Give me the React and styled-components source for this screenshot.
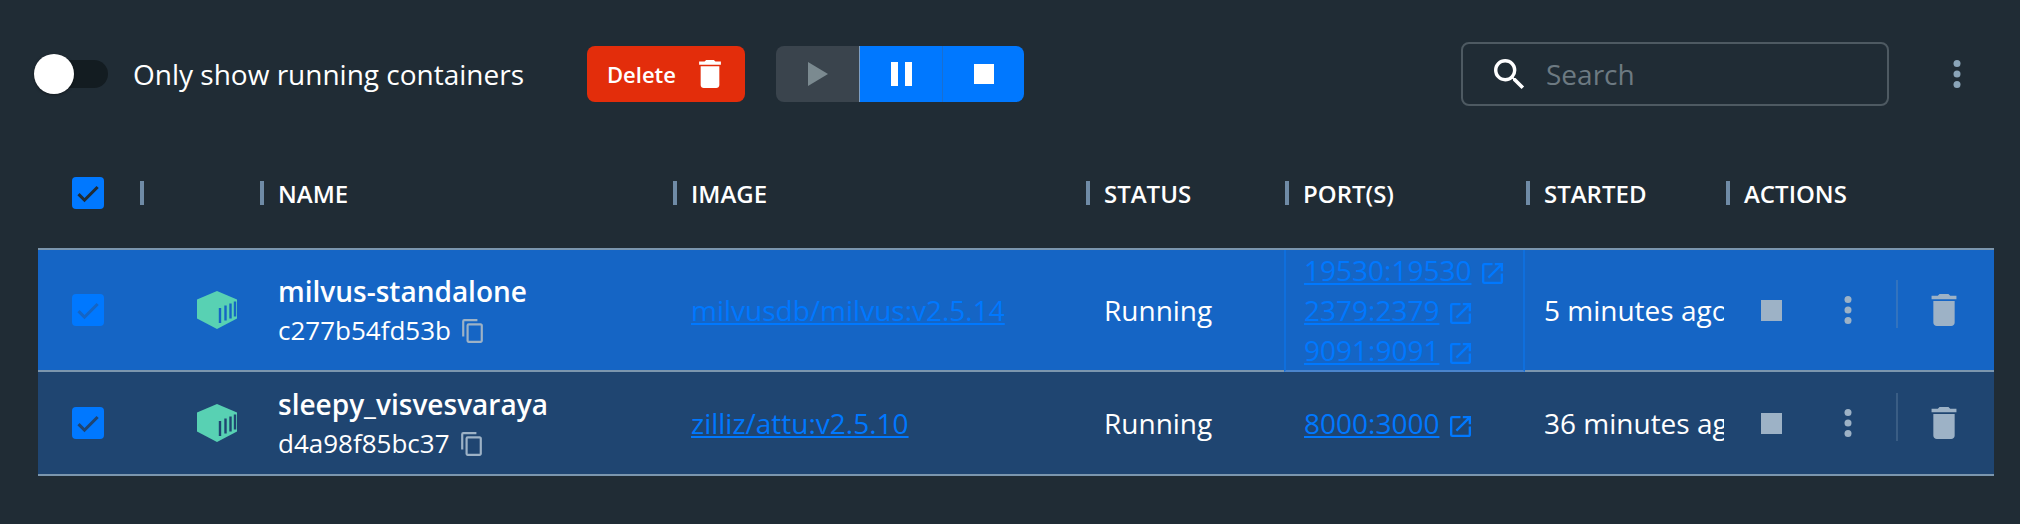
import React from "react";
import styled, { createGlobalStyle } from "styled-components";

const GlobalStyle = createGlobalStyle`
  html, body {
    margin: 0;
    background: #202c35;
    color: #fff;
    font-family: "Open Sans", "Noto Sans", sans-serif;
  }
`;

const COLUMNS = "102px 120px 413px 413px 199px 241px 200px 268px";

const containers = [
  {
    name: "milvus-standalone",
    id: "c277b54fd53b",
    image: "milvusdb/milvus:v2.5.14",
    ports: ["19530:19530", "2379:2379", "9091:9091"],
    started: "5 minutes ago",
    hovered: true,
  },
  {
    name: "sleepy_visvesvaraya",
    id: "d4a98f85bc37",
    image: "zilliz/attu:v2.5.10",
    ports: ["8000:3000"],
    started: "36 minutes ago",
  },
];

const Page = styled.div`
  width: 2020px;
  height: 524px;
  overflow: hidden;
  padding-top: 42px;
  box-sizing: border-box;
`;

const Toolbar = styled.div`
  display: flex;
  align-items: center;
  height: 64px;
  padding: 0 59px 0 34px;
`;

const Switch = styled.div`
  position: relative;
  width: 74px;
  height: 28px;
  border-radius: 14px;
  background: #131c21;
`;

const Knob = styled.div`
  position: absolute;
  left: 0;
  top: -6px;
  width: 40px;
  height: 40px;
  border-radius: 50%;
  background: #fff;
  box-shadow: 0 1px 3px rgba(0, 0, 0, 0.4);
`;

const SwitchLabel = styled.span`
  margin-left: 25px;
  width: 454px;
  font-size: 28px;
  white-space: nowrap;
`;

const DeleteButton = styled.button`
  display: flex;
  align-items: center;
  justify-content: space-between;
  width: 158px;
  height: 56px;
  padding: 0 21px 0 20px;
  border: 0;
  border-radius: 8px;
  background: #e32d0b;
  color: #fff;
  font-family: inherit;
  font-size: 22px;
  font-weight: 600;
`;

const ButtonGroup = styled.div`
  display: flex;
  margin-left: 31px;
  height: 56px;
  border-radius: 8px;
  overflow: hidden;
`;

const GroupButton = styled.button`
  display: flex;
  align-items: center;
  justify-content: center;
  width: ${(p) => p.$width}px;
  padding: 0;
  border: 0;
  border-left: ${(p) => (p.$divider ? `1px solid ${p.$divider}` : "0")};
  background: ${(p) => (p.$disabled ? "#3a444d" : "#0078ff")};
  box-sizing: border-box;
`;

const SearchBox = styled.div`
  display: flex;
  align-items: center;
  margin-left: auto;
  width: 428px;
  height: 64px;
  box-sizing: border-box;
  padding-left: 31px;
  border: 2px solid #4e5a62;
  border-radius: 8px;
`;

const Placeholder = styled.span`
  margin-left: 21px;
  font-size: 28px;
  color: #6d7a82;
`;

const MoreButton = styled.div`
  display: flex;
  margin-left: 64px;
`;

const Table = styled.div`
  margin: 32px 26px 0 38px;
`;

const HeaderRow = styled.div`
  display: grid;
  grid-template-columns: ${COLUMNS};
  align-items: center;
  height: 110px;
`;

const HeaderCell = styled.div`
  display: flex;
  align-items: center;
  gap: 14px;
  font-size: 24px;
  font-weight: 600;
`;

const HeaderBar = styled.span`
  width: 4px;
  height: 24px;
  background: #6f8ba6;
`;

const Row = styled.div`
  display: grid;
  grid-template-columns: ${COLUMNS};
  align-items: center;
  min-height: 102px;
  border-top: 2px solid #7b96ae;
  background: ${(p) => (p.$hovered ? "#1565c5" : "#1f4571")};
  &:last-child {
    border-bottom: 2px solid #7b96ae;
  }
`;

const CheckCell = styled.div`
  padding-left: 34px;
`;

const CheckBox = styled.div`
  display: flex;
  align-items: center;
  justify-content: center;
  width: 32px;
  height: 32px;
  border-radius: 4px;
  background: #0078ff;
`;

const IconCell = styled.div`
  display: flex;
  padding-left: 56px;
`;

const NameCell = styled.div`
  padding: 2px 0 0 18px;
`;

const ContainerName = styled.div`
  font-size: 28px;
  font-weight: 600;
  line-height: 39px;
  white-space: nowrap;
`;

const ContainerId = styled.div`
  display: flex;
  align-items: center;
  gap: 11px;
  font-size: 26px;
  line-height: 39px;
`;

const ImageLink = styled.a`
  padding-left: 18px;
  font-size: 28px;
  color: #0078ff;
  text-decoration: underline;
`;

const TextCell = styled.div`
  padding-left: 18px;
  font-size: 28px;
  white-space: nowrap;
  overflow: hidden;
`;

const StartedCell = styled(TextCell)`
  margin-right: 2px;
`;

const PortCell = styled.div`
  position: relative;
  align-self: stretch;
  display: flex;
  flex-direction: column;
  justify-content: center;
  margin: 0 1px -2px -1px;
  padding-left: 18px;
  border: 2px solid ${(p) => (p.$outlined ? "#0f6fdd" : "transparent")};
  border-top: 0;
  border-bottom-color: ${(p) => (p.$outlined ? "#4a84cc" : "transparent")};
`;

const PortLine = styled.div`
  display: flex;
  align-items: center;
  gap: 11px;
  height: 40px;
`;

const PortLink = styled.a`
  font-size: 28px;
  line-height: 40px;
  color: #0078ff;
  text-decoration: underline;
`;

const PortIcon = styled.span`
  display: flex;
  margin-top: 7px;
`;

const Actions = styled.div`
  display: flex;
  align-items: center;
  height: 100%;
`;

const ActionSlot = styled.div`
  display: flex;
  align-items: center;
  justify-content: center;
  width: ${(p) => p.$width}px;
`;

const ActionDivider = styled.span`
  width: 2px;
  height: 48px;
  margin: 0 0 12px 17px;
  background: rgba(123, 150, 174, 0.3);
`;

const TrashGlyph = ({ size, color }) => (
  <svg width={size} height={size} viewBox="5 3 14 18" fill={color}>
    <path d="M6 19c0 1.1.9 2 2 2h8c1.1 0 2-.9 2-2V7H6v12zM19 4h-3.5l-1-1h-5l-1 1H5v2h14V4z" />
  </svg>
);

const Dots = ({ color }) => (
  <svg width="8" height="28" viewBox="0 0 8 28" fill={color}>
    <circle cx="4" cy="3.5" r="3.5" />
    <circle cx="4" cy="14" r="3.5" />
    <circle cx="4" cy="24.5" r="3.5" />
  </svg>
);

const SearchGlyph = () => (
  <svg width="31" height="31" viewBox="3 3 18 18" fill="#fff">
    <path d="M15.5 14h-.79l-.28-.27A6.47 6.47 0 0 0 16 9.5 6.5 6.5 0 1 0 9.5 16c1.61 0 3.09-.59 4.23-1.57l.27.28v.79l5 4.99L20.49 19l-4.99-5zm-6 0C7.01 14 5 11.99 5 9.5S7.01 5 9.5 5 14 7.01 14 9.5 11.99 14 9.5 14z" />
  </svg>
);

const CheckGlyph = ({ color }) => (
  <svg width="28" height="28" viewBox="0 0 24 24" fill={color}>
    <path d="M9 16.2 4.8 12l-1.9 1.9L9 20 21.2 7.8l-1.9-1.9z" />
  </svg>
);

const ContainerGlyph = ({ stripe }) => (
  <svg width="42" height="38" viewBox="0 0 42 38">
    <path d="M21 0 41 8.5V27.5L21 38 1 27.5V8.5Z" fill="#58d1b3" />
    <path d="M24 17v15M29.5 14.5v15M34.5 12.5v15M39 10.5v15" stroke={stripe} strokeWidth="2.4" />
  </svg>
);

const CopyGlyph = () => (
  <svg width="21" height="24" viewBox="2 1 19 22" fill="#9db2c6">
    <path d="M16 1H4a2 2 0 0 0-2 2v14h2V3h12V1zm3 4H8a2 2 0 0 0-2 2v14c0 1.1.9 2 2 2h11c1.1 0 2-.9 2-2V7c0-1.1-.9-2-2-2zm0 16H8V7h11v14z" />
  </svg>
);

const OpenGlyph = () => (
  <svg width="21" height="21" viewBox="3 3 18 18" fill="#0078ff">
    <path d="M19 19H5V5h7V3H5a2 2 0 0 0-2 2v14a2 2 0 0 0 2 2h14c1.1 0 2-.9 2-2v-7h-2v7zM14 3v2h3.59l-9.83 9.83 1.41 1.41L19 6.41V10h2V3h-7z" />
  </svg>
);

const headers = ["", "NAME", "IMAGE", "STATUS", "PORT(S)", "STARTED", "ACTIONS"];

export default function App() {
  return (
    <Page>
      <GlobalStyle />
      <Toolbar>
        <Switch>
          <Knob />
        </Switch>
        <SwitchLabel>Only show running containers</SwitchLabel>
        <DeleteButton>
          Delete
          <TrashGlyph size={28} color="#fff" />
        </DeleteButton>
        <ButtonGroup>
          <GroupButton $width={83} $disabled>
            <svg width="20" height="24" viewBox="0 0 20 24" fill="#7b8a90">
              <path d="M0 0 20 12 0 24Z" />
            </svg>
          </GroupButton>
          <GroupButton $width={83} $divider="#7d9fc4">
            <svg width="21" height="24" viewBox="0 0 21 24" fill="#fff">
              <rect width="7" height="24" />
              <rect x="14" width="7" height="24" />
            </svg>
          </GroupButton>
          <GroupButton $width={82} $divider="#1a6fd0">
            <svg width="20" height="20" viewBox="0 0 20 20" fill="#fff">
              <rect width="20" height="20" />
            </svg>
          </GroupButton>
        </ButtonGroup>
        <SearchBox>
          <SearchGlyph />
          <Placeholder>Search</Placeholder>
        </SearchBox>
        <MoreButton>
          <Dots color="#8aa4b8" />
        </MoreButton>
      </Toolbar>
      <Table>
        <HeaderRow>
          <CheckCell>
            <CheckBox>
              <CheckGlyph color="#202c35" />
            </CheckBox>
          </CheckCell>
          {headers.map((title) => (
            <HeaderCell key={title}>
              <HeaderBar />
              {title}
            </HeaderCell>
          ))}
        </HeaderRow>
        {containers.map((c) => (
          <Row key={c.id} $hovered={c.hovered}>
            <CheckCell>
              <CheckBox>
                <CheckGlyph color={c.hovered ? "#1565c5" : "#1f4571"} />
              </CheckBox>
            </CheckCell>
            <IconCell>
              <ContainerGlyph stripe={c.hovered ? "#1565c5" : "#1f4571"} />
            </IconCell>
            <NameCell>
              <ContainerName>{c.name}</ContainerName>
              <ContainerId>
                {c.id}
                <CopyGlyph />
              </ContainerId>
            </NameCell>
            <div>
              <ImageLink>{c.image}</ImageLink>
            </div>
            <TextCell>Running</TextCell>
            <PortCell $outlined={c.hovered}>
              {c.ports.map((port) => (
                <PortLine key={port}>
                  <PortLink>{port}</PortLink>
                  <PortIcon>
                    <OpenGlyph />
                  </PortIcon>
                </PortLine>
              ))}
            </PortCell>
            <StartedCell>{c.started}</StartedCell>
            <Actions>
              <ActionSlot $width={91}>
                <svg width="21" height="21" viewBox="0 0 21 21" fill="#9db2c6">
                  <rect width="21" height="21" />
                </svg>
              </ActionSlot>
              <ActionSlot $width={62}>
                <Dots color="#9db2c6" />
              </ActionSlot>
              <ActionDivider />
              <ActionSlot $width={91}>
                <TrashGlyph size={32} color="#9db2c6" />
              </ActionSlot>
            </Actions>
          </Row>
        ))}
      </Table>
    </Page>
  );
}
